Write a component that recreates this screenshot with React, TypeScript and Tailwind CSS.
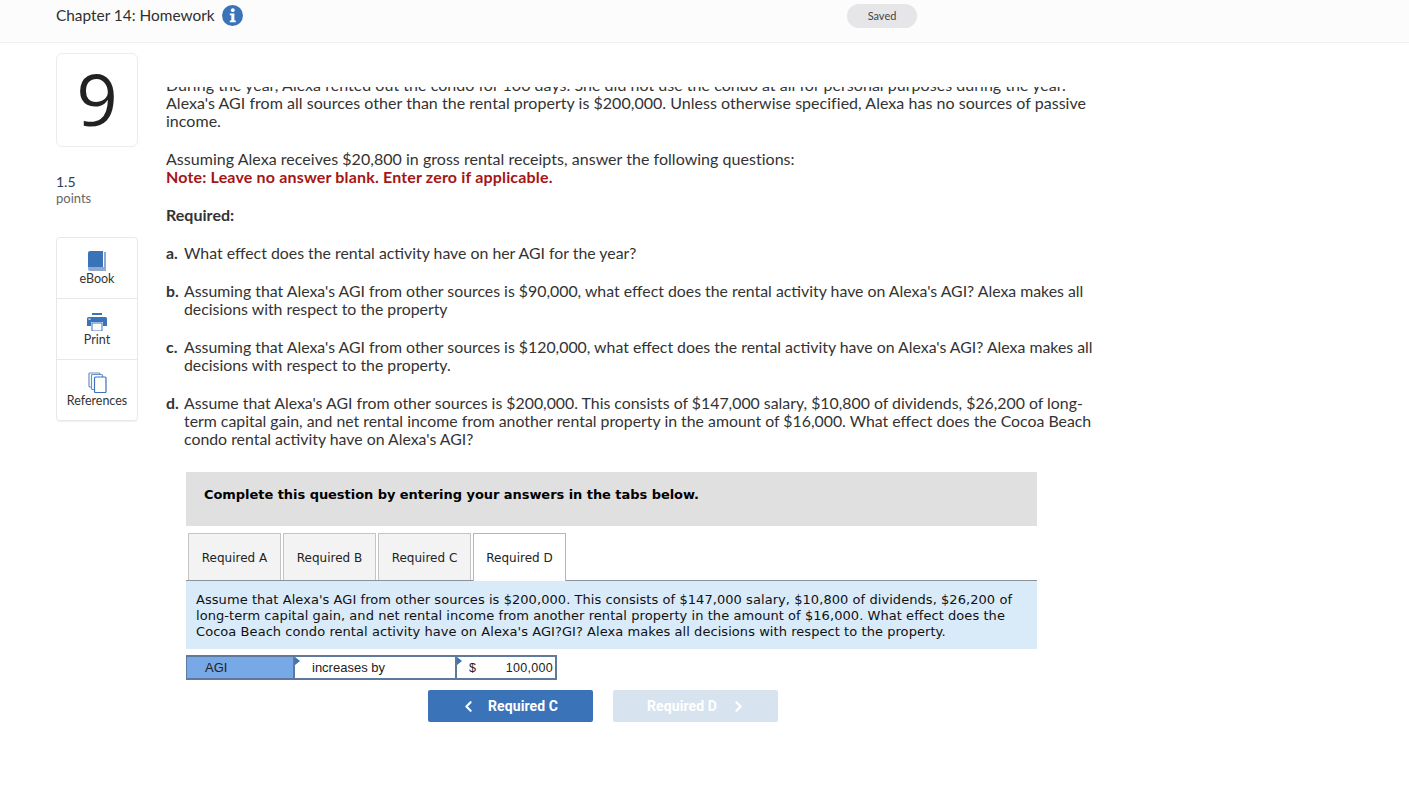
import { ChevronLeft, ChevronRight } from "lucide-react";

const InfoIcon = () => (
  <svg width="21" height="21" viewBox="0 0 21 21" className="ml-[7px]">
    <circle cx="10.5" cy="10.5" r="10.5" fill="#3b73b9" />
    <circle cx="10.8" cy="5.2" r="1.9" fill="#fff" />
    <path d="M7.8 8.6h4.6v7h1.4v1.6H7.8v-1.6h1.5v-5.4H7.8z" fill="#fff" />
  </svg>
);

const BookIcon = () => (
  <svg width="18" height="20" viewBox="0 0 18 20">
    <path d="M0 2a2 2 0 0 1 2-2h13v16H2a2 2 0 0 0-2 1z" fill="#3b73b9" />
    <path d="M0 18a2 2 0 0 1 2-2h14V1h2v19H2a2 2 0 0 1-2-2z" fill="#8fa9cf" />
  </svg>
);

const PrintIcon = () => (
  <svg width="20" height="18" viewBox="0 0 20 18">
    <rect x="5" y="0" width="10" height="2" fill="#3b73b9" />
    <path d="M1.500 4h17A1.500 1.500 0 0 1 20 5.500V13h-4V9H4v4H0V5.500A1.500 1.500 0 0 1 1.500 4z" fill="#3b73b9" />
    <rect x="1.500" y="5.500" width="2" height="1.200" fill="#fff" />
    <rect x="5" y="10" width="10" height="8" fill="#fff" stroke="#3b73b9" strokeWidth="1" />
  </svg>
);

const RefIcon = () => (
  <svg width="19" height="21" viewBox="0 0 19 21" fill="#fff" stroke="#6d8fc2" strokeWidth="1.200">
    <rect x="1" y="1" width="11" height="14" rx="1" />
    <rect x="3.500" y="2.500" width="11" height="15" rx="1" />
    <rect x="6.500" y="5" width="11.500" height="15.500" rx="1" stroke="#3b73b9" />
  </svg>
);

const tools = [
  { label: "eBook", icon: <BookIcon />, h: "h-[61px]" },
  { label: "Print", icon: <PrintIcon />, h: "h-[61px]" },
  { label: "References", icon: <RefIcon />, h: "h-[60px]" },
];

const Question = ({ letter, children }: { letter: string; children: React.ReactNode }) => (
  <p className="pl-[18px] -indent-[18px] mb-5 text-[15.850px] tracking-normal">
    <b className="inline-block w-[18px] indent-0 font-bold">{letter}.</b>
    {children}
  </p>
);

const Tab = ({ label, active }: { label: string; active?: boolean }) => (
  <div
    className={
      active
        ? "w-[93px] h-[48px] -mb-px flex items-center justify-center bg-white border border-[#b5b5b5] border-b-0 z-10"
        : "w-[93px] h-[47px] pt-px flex items-center justify-center bg-[#f3f3f3] border border-[#c4c4c4] border-b-0"
    }
  >
    {label}
  </div>
);

export default function App() {
  return (
    <div className="w-[1409px] h-[807px] bg-white overflow-hidden font-['Lato',sans-serif] text-[#333]">
      <header className="h-[43px] bg-[#fcfcfc] border-b border-[#eeeeee] flex items-center pl-[56px] pb-[11px] relative">
        <span className="text-[15.400px] text-[#2f2f2f]">Chapter 14: Homework</span>
        <InfoIcon />
        <div className="absolute left-[847px] top-[4px] w-[70px] h-[24px] rounded-full bg-[#e6e6e9] flex items-center justify-center text-[11px] text-[#444]">
          Saved
        </div>
      </header>

      <div className="flex pl-[56px]">
        <aside className="w-[82px] pt-[10px] shrink-0">
          <div className="h-[94px] border border-[#ececec] rounded-[6px] flex items-center justify-center font-['Open_Sans',sans-serif] text-[72px] leading-none text-[#222] pb-1">
            9
          </div>
          <div className="mt-[26px] text-[14px] leading-[18px] text-[#27405f]">1.5</div>
          <div className="text-[13px] leading-[16px] mt-[-1px] text-[#666]">points</div>
          <div className="mt-[31px] border border-[#e8e8e8] rounded-[4px] shadow-[0_1px_1px_#f0f0f0]">
            {tools.map((t, i) => (
              <div
                key={t.label}
                className={`${t.h} flex flex-col items-center pt-[12px] text-[12.500px] leading-[14px] text-[#333] ${i < 2 ? "border-b border-[#e8e8e8]" : ""}`}
              >
                <div className="h-[21px] flex items-center">{t.icon}</div>
                <span className="mt-[1px]">{t.label}</span>
              </div>
            ))}
          </div>
        </aside>

        <main className="ml-[28px] w-[940px] h-[762px] mt-[44px] overflow-hidden text-[16px] tracking-[0.03px] leading-[18px] text-[#333]">
          <div className="-mt-[11px]">
            <p className="whitespace-nowrap">
              During the year, Alexa rented out the condo for 100 days. She did not use the condo at all for personal purposes during the year.
            </p>
            <p className="mb-5">
              Alexa's AGI from all sources other than the rental property is $200,000. Unless otherwise specified, Alexa has no sources of passive income.
            </p>
            <p>Assuming Alexa receives $20,800 in gross rental receipts, answer the following questions:</p>
            <p className="font-bold tracking-[0.17px] text-[#a61515] mb-5">Note: Leave no answer blank. Enter zero if applicable.</p>
            <p className="font-bold mb-5">Required:</p>
            <Question letter="a">What effect does the rental activity have on her AGI for the year?</Question>
            <Question letter="b">
              Assuming that Alexa's AGI from other sources is $90,000, what effect does the rental activity have on Alexa's AGI? Alexa makes all decisions with respect to the property
            </Question>
            <Question letter="c">
              Assuming that Alexa's AGI from other sources is $120,000, what effect does the rental activity have on Alexa's AGI? Alexa makes all decisions with respect to the property.
            </Question>
            <Question letter="d">
              Assume that Alexa's AGI from other sources is $200,000. This consists of $147,000 salary, $10,800 of dividends, $26,200 of long-term capital gain, and net rental income from another rental property in the amount of $16,000. What effect does the Cocoa Beach condo rental activity have on Alexa's AGI?
            </Question>

            <div className="ml-5 mt-[24px] w-[851px] tracking-normal font-['DejaVu_Sans',sans-serif]">
              <div className="h-[54px] bg-[#e0e0e0] pl-[18px] pt-[14px] font-bold text-[13px] tracking-[-0.05px] text-black">
                Complete this question by entering your answers in the tabs below.
              </div>
              <div className="mt-[7px] pl-[2px] flex gap-[2px] items-end border-b border-[#8a9199] text-[12px] text-[#222]">
                <Tab label="Required A" />
                <Tab label="Required B" />
                <Tab label="Required C" />
                <Tab label="Required D" active />
              </div>
              <div className="h-[68px] bg-[#d9ebf9] px-[10px] pt-[11px] text-[13px] tracking-[0.06px] leading-[16px] text-[#111]">
                Assume that Alexa's AGI from other sources is $200,000. This consists of $147,000 salary, $10,800 of dividends, $26,200 of long-term capital gain, and net rental income from another rental property in the amount of $16,000. What effect does the Cocoa Beach condo rental activity have on Alexa's AGI?GI? Alexa makes all decisions with respect to the property.
              </div>
              <div className="mt-[6px] flex w-[371px] h-[25px] border-2 border-l border-[#5d7a9c] font-['Liberation_Sans',sans-serif] text-[13px] text-[#222]">
                <div className="w-[106px] bg-[#77a9e6] pl-[18px] flex items-center">AGI</div>
                <div className="relative w-[164px] bg-white border-x-2 border-[#5d7a9c] pl-[17px] flex items-center">
                  increases by
                  <span className="absolute left-0 top-0 border-y-[4px] border-l-[5px] border-y-transparent border-l-[#3b73b9]" />
                </div>
                <div className="relative flex-1 bg-white pl-[12px] pr-[2px] flex items-center justify-between text-[12.500px]">
                  <span>$</span>
                  <span className="tracking-[0.3px]">100,000</span>
                  <span className="absolute left-0 top-0 border-y-[4px] border-l-[5px] border-y-transparent border-l-[#3b73b9]" />
                </div>
              </div>
              <div className="mt-[10px] ml-[242px] flex gap-5 font-['Roboto',sans-serif] font-bold text-[14px] tracking-[0.1px] text-white">
                <div className="w-[165px] h-[32px] pl-[32px] bg-[#3b73b9] rounded-[2px] flex items-center">
                  <ChevronLeft size={17} strokeWidth={3} className="mr-[11px]" />
                  Required C
                </div>
                <div className="w-[165px] h-[32px] pl-[34px] bg-[#d8e3f0] rounded-[2px] flex items-center">
                  Required D
                  <ChevronRight size={17} strokeWidth={3} className="ml-[13px]" />
                </div>
              </div>
            </div>
          </div>
        </main>
      </div>
    </div>
  );
}
